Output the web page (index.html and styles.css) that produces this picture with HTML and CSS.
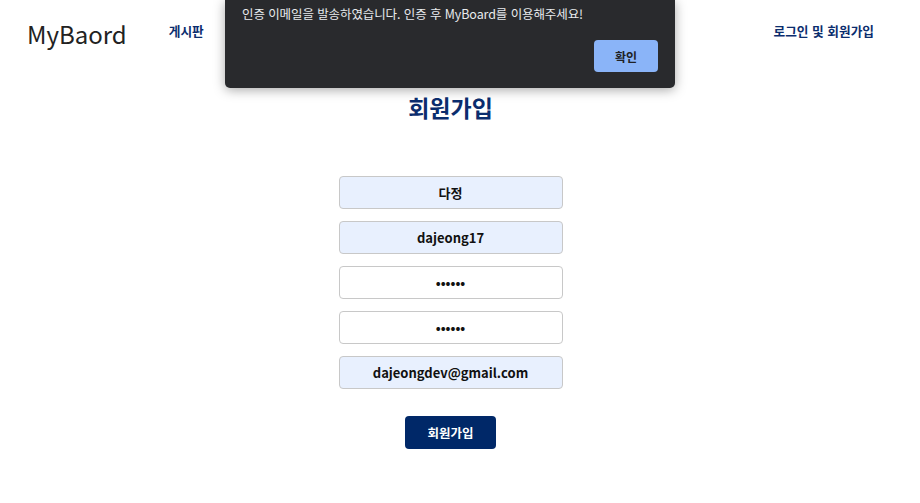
FILE: index.html
```html
<!DOCTYPE html>
<html lang="ko">
<head>
<meta charset="utf-8">
<title>MyBaord</title>
<link rel="stylesheet" href="styles.css">
</head>
<body>
<header class="header">
  <div class="header-left">
    <a class="logo">MyBaord</a>
    <a class="nav-link">게시판</a>
  </div>
  <a class="nav-link">로그인 및 회원가입</a>
</header>
<main class="main">
  <h1 class="title">회원가입</h1>
  <form class="form">
    <div class="field autofill">다정</div>
    <div class="field autofill">dajeong17</div>
    <div class="field">••••••</div>
    <div class="field">••••••</div>
    <div class="field autofill">dajeongdev@gmail.com</div>
    <button type="button" class="submit">회원가입</button>
  </form>
</main>
<div class="dialog">
  <p class="dialog-text">인증 이메일을 발송하였습니다. 인증 후 MyBoard를 이용해주세요!</p>
  <div class="dialog-actions">
    <button type="button" class="dialog-btn">확인</button>
  </div>
</div>
</body>
</html>
```

FILE: styles.css
```css
* { box-sizing: border-box; }
html, body { margin: 0; padding: 0; }
body {
  font-family: "Noto Sans CJK KR", "Noto Sans", sans-serif;
  background: #fff;
  color: #111;
  width: 920px;
  height: 503px;
  overflow: hidden;
  position: relative;
}
.header {
  height: 62px;
  display: flex;
  align-items: center;
  justify-content: space-between;
  padding: 0 46px 0 27px;
}
.header-left {
  display: flex;
  align-items: center;
  gap: 42px;
}
.logo {
  font-size: 24px;
  color: #222;
  font-weight: 400;
  margin-top: 4px;
}
.nav-link {
  font-size: 12.7px;
  font-weight: 700;
  color: #0b2d6e;
  margin-top: -2px;
}
.main {
  display: flex;
  flex-direction: column;
  align-items: center;
  padding-right: 19px;
}
.title {
  margin: 28px 0 0;
  font-size: 23px;
  font-weight: 700;
  color: #0b2d6e;
  line-height: 34px;
}
.form {
  margin-top: 52px;
  display: flex;
  flex-direction: column;
  align-items: center;
  gap: 12px;
}
.field {
  width: 224px;
  height: 33px;
  border: 1px solid #c8c8c8;
  border-radius: 4px;
  background: #fff;
  display: flex;
  align-items: center;
  justify-content: center;
  font-size: 13px;
  font-weight: 700;
  color: #111;
}
.field.autofill { background: #e8f0fe; }
.submit {
  margin-top: 15px;
  width: 91px;
  height: 33px;
  border: none;
  border-radius: 4px;
  background: #002868;
  color: #fff;
  font-family: inherit;
  font-size: 12.5px;
  font-weight: 700;
}
.dialog {
  position: absolute;
  left: 225px;
  top: 0;
  width: 450px;
  height: 88px;
  background: #292a2d;
  border-radius: 0 0 5px 5px;
  box-shadow: 0 2px 12px rgba(0,0,0,0.35);
  padding: 4px 17px 16px;
  display: flex;
  flex-direction: column;
}
.dialog-text {
  margin: 0;
  font-size: 12.5px;
  letter-spacing: -0.1px;
  line-height: 20px;
  color: #e8eaed;
}
.dialog-actions {
  margin-top: auto;
  display: flex;
  justify-content: flex-end;
}
.dialog-btn {
  width: 64px;
  height: 32px;
  border: none;
  border-radius: 4px;
  background: #8ab4f8;
  color: #202124;
  font-family: inherit;
  font-size: 12px;
  font-weight: 700;
}
```
